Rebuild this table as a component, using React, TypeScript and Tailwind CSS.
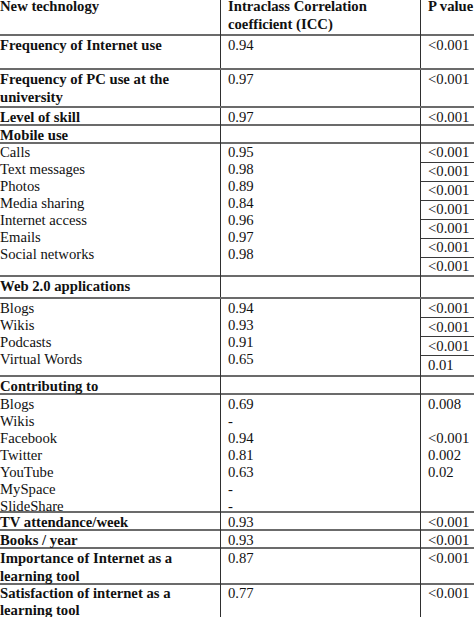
import * as React from "react"

type PCell = { text: string; h: string; pt: string; last?: boolean }

type Row = {
    h: string
    pt: string
    bold?: boolean
    leading?: string
    label: string[]
    icc: string[]
    p?: string[]
    pCells?: PCell[]
}

const mobileCells: PCell[] = Array.from({ length: 7 }, (_, i) => ({
    text: "<0.001",
    h: "h-[19px]",
    pt: "pt-0",
    last: i === 6,
}))

const webCells: PCell[] = [
    { text: "<0.001", h: "h-[19px]", pt: "pt-px" },
    { text: "<0.001", h: "h-[19px]", pt: "pt-px" },
    { text: "<0.001", h: "h-[19px]", pt: "pt-px" },
    { text: "0.01", h: "h-[21px]", pt: "pt-px", last: true },
]

const rows: Row[] = [
    { h: "h-[34px]", pt: "pt-px", bold: true, label: ["Frequency of Internet use"], icc: ["0.94"], p: ["<0.001"] },
    { h: "h-[38px]", pt: "pt-px", bold: true, leading: "leading-[17.7px]", label: ["Frequency of PC use at the", "university"], icc: ["0.97"], p: ["<0.001"] },
    { h: "h-[18px]", pt: "pt-px", bold: true, label: ["Level of skill"], icc: ["0.97"], p: ["<0.001"] },
    { h: "h-[18px]", pt: "pt-px", bold: true, label: ["Mobile use"], icc: [], p: [] },
    {
        h: "h-[133px]", pt: "pt-0",
        label: ["Calls", "Text messages", "Photos", "Media sharing", "Internet access", "Emails", "Social networks"],
        icc: ["0.95", "0.98", "0.89", "0.84", "0.96", "0.97", "0.98"],
        pCells: mobileCells,
    },
    { h: "h-[22px]", pt: "pt-px", bold: true, label: ["Web 2.0 applications"], icc: [], p: [] },
    {
        h: "h-[78px]", pt: "pt-px",
        label: ["Blogs", "Wikis", "Podcasts", "Virtual Words"],
        icc: ["0.94", "0.93", "0.91", "0.65"],
        pCells: webCells,
    },
    { h: "h-[18px]", pt: "pt-px", bold: true, label: ["Contributing to"], icc: [], p: [] },
    {
        h: "h-[118px]", pt: "pt-px",
        label: ["Blogs", "Wikis", "Facebook", "Twitter", "YouTube", "MySpace", "SlideShare"],
        icc: ["0.69", "-", "0.94", "0.81", "0.63", "-", "-"],
        p: ["0.008", "", "<0.001", "0.002", "0.02"],
    },
    { h: "h-[18px]", pt: "pt-px", bold: true, label: ["TV attendance/week"], icc: ["0.93"], p: ["<0.001"] },
    { h: "h-[18px]", pt: "pt-px", bold: true, label: ["Books / year"], icc: ["0.93"], p: ["<0.001"] },
    { h: "h-[36px]", pt: "pt-px", bold: true, leading: "leading-[17.7px]", label: ["Importance of Internet as a", "learning tool"], icc: ["0.87"], p: ["<0.001"] },
    { h: "h-[44px]", pt: "pt-0", bold: true, leading: "leading-[17px]", label: ["Satisfaction of internet as a", "learning tool"], icc: ["0.77"], p: ["<0.001"] },
]

function Lines({ items }: { items: string[] }) {
    return (
        <>
            {items.map((t, i) => (
                <div key={i} className="whitespace-nowrap">{t === "" ? "\u00a0" : t}</div>
            ))}
        </>
    )
}

function TableRow({ row }: { row: Row }) {
    const leading = row.leading ?? "leading-[17px]"
    return (
        <div className={`grid grid-cols-[220px_200px_1fr] border-b-2 border-[#6b6b6b] ${row.h}`}>
            <div className={`${row.pt} ${leading} ${row.bold ? "font-bold" : ""}`}>
                <Lines items={row.label} />
            </div>
            <div className={`border-l border-[#2f2f2f] pl-[7px] ${row.pt} leading-[17px]`}>
                <Lines items={row.icc} />
            </div>
            <div className={`border-l border-[#2f2f2f] leading-[17px] ${row.pCells ? "" : `pl-[7px] ${row.pt}`}`}>
                {row.pCells
                    ? row.pCells.map((c, i) => (
                        <div key={i} className={`pl-[7px] ${c.h} ${c.pt} ${c.last ? "" : "border-b border-[#3a3a3a]"}`}>
                            {c.text}
                        </div>
                    ))
                    : <Lines items={row.p ?? []} />}
            </div>
        </div>
    )
}

export default function App() {
    return (
        <div className="w-[474px] h-[617px] overflow-hidden bg-white text-[#111] font-['Liberation_Serif','Times_New_Roman',serif] text-[14.7px]">
            <div className="w-[490px]">
                {/* header: first line sits tight against the top edge */}
                <div className="grid grid-cols-[220px_200px_1fr] border-b-2 border-[#6b6b6b] h-[36px] font-bold">
                    <div className="leading-[12px] whitespace-nowrap">New technology</div>
                    <div className="border-l border-[#2f2f2f] pl-[7px]">
                        <div className="leading-[12px] whitespace-nowrap">Intraclass Correlation</div>
                        <div className="leading-[24px] whitespace-nowrap">coefficient (ICC)</div>
                    </div>
                    <div className="border-l border-[#2f2f2f] pl-[7px] leading-[12px] whitespace-nowrap">P value</div>
                </div>
                {rows.map((row, i) => (
                    <TableRow key={i} row={row} />
                ))}
            </div>
        </div>
    )
}
